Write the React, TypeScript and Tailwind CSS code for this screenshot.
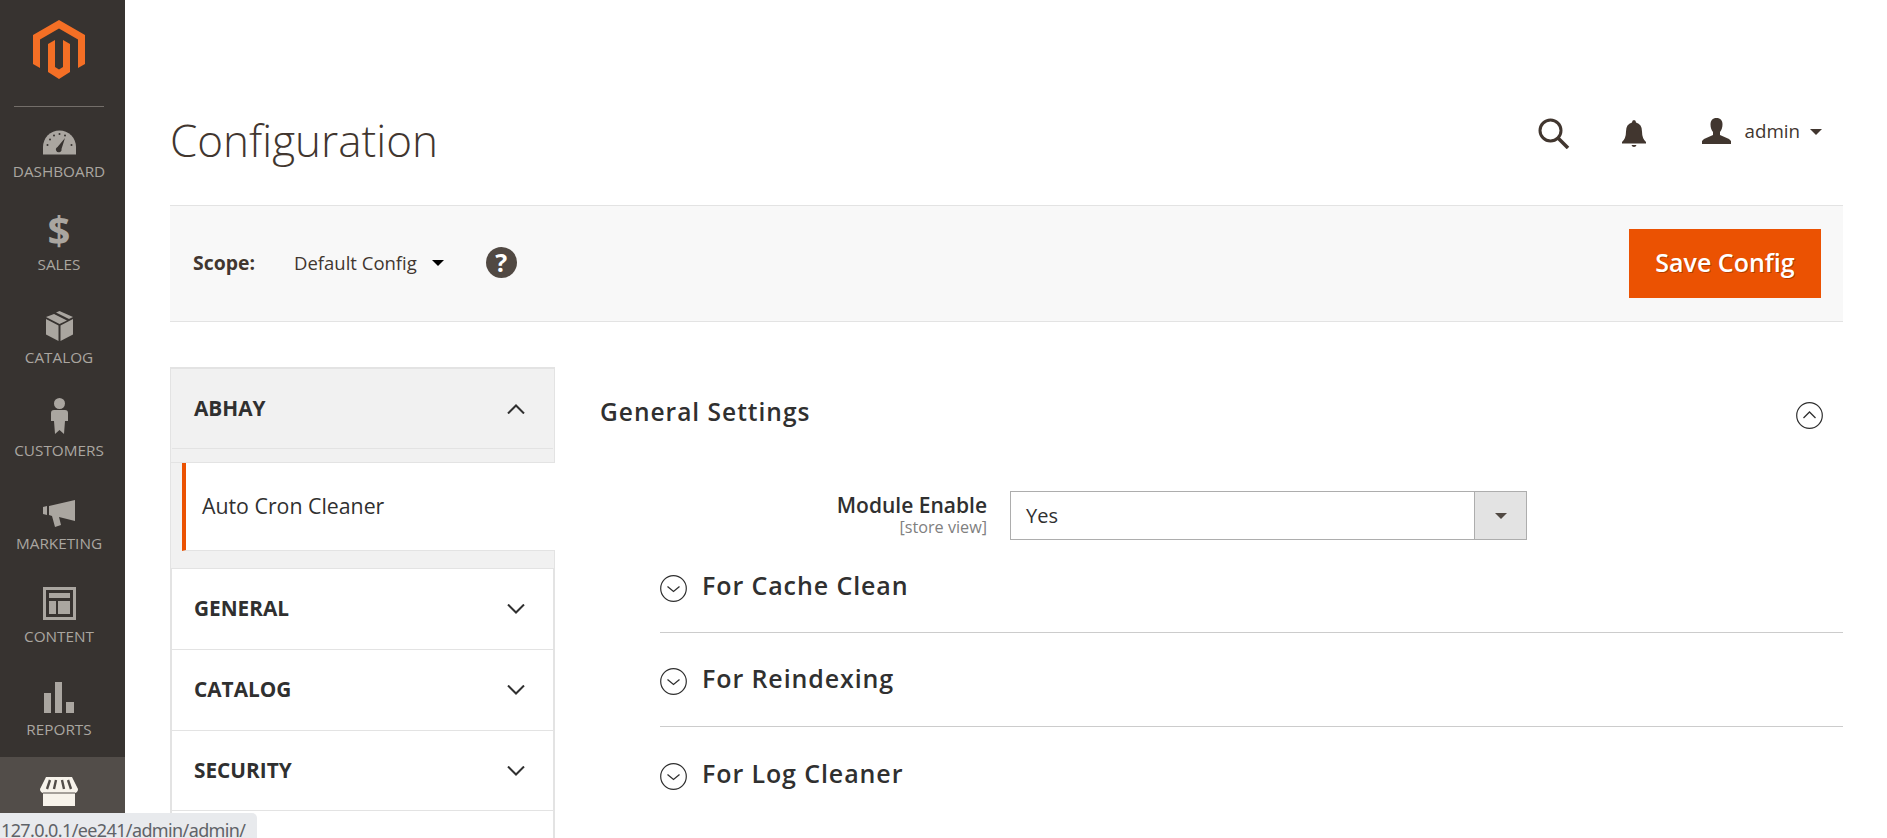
import type { ReactNode } from "react";

const font = "font-['Open_Sans',sans-serif]";

/* sidebar icons, drawn to the pixel box they have in the admin menu */
const DashboardIcon = () => (
  <svg width="33" height="25" viewBox="0 0 33 25">
    <path d="M0 24.500V17A16.500 16.500 0 0 1 33 17v7.500z" fill="#aaa6a0" />
    <g fill="#373330">
      <circle cx="4.500" cy="15" r="1" />
      <circle cx="7" cy="9.500" r="1" />
      <circle cx="11" cy="5.500" r="1" />
      <circle cx="16.500" cy="4" r="1" />
      <circle cx="22" cy="5.500" r="1" />
      <circle cx="28.500" cy="15" r="1" />
      <path d="M22 8l-3.500 11a2.800 2.800 0 1 1-4-2z" />
    </g>
  </svg>
);

const BoxIcon = () => (
  <svg width="27" height="30" viewBox="0 0 27 30">
    <path d="M0 8l12.500 6.500V30L0 23.500z M14.500 14.500L27 8v15.500L14.500 30z" fill="#aaa6a0" />
    <path d="M13.500 0L27 6l-4 2-13-6.500z M8 3l13 6.500-7.500 3.500L0 6z" fill="#aaa6a0" />
  </svg>
);

const CustomerIcon = () => (
  <svg width="17" height="36" viewBox="0 0 17 36">
    <circle cx="8.500" cy="5.500" r="5.500" fill="#aaa6a0" />
    <path d="M3 12h11q3 0 3 3v8h-3l-1 13-4.500-4L4 36 3 23H0v-8q0-3 3-3z" fill="#aaa6a0" />
  </svg>
);

const MegaphoneIcon = () => (
  <svg width="32" height="27" viewBox="0 0 32 27">
    <path d="M0 7l4-1v9l-4-1z M6 6l26-6v21L16 17l2 8-6 2-3-11-3-1z" fill="#aaa6a0" />
  </svg>
);

const ContentIcon = () => (
  <svg width="33" height="33" viewBox="0 0 33 33">
    <path fillRule="evenodd" d="M0 0h33v33H0z M3 3v27h27V3z" fill="#aaa6a0" />
    <path d="M6 6h21v5H6z M6 14h7v13H6z M15 14h12v13H15z" fill="#aaa6a0" />
  </svg>
);

const ReportsIcon = () => (
  <svg width="30" height="31" viewBox="0 0 30 31">
    <path d="M0 11h7v20H0z M11 0h7v31h-7z M22 20h8v11h-8z" fill="#aaa6a0" />
  </svg>
);

const StoreIcon = () => (
  <svg width="38" height="29" viewBox="0 0 38 29">
    <path d="M6 0h26l6 12q0 3-3 4v13H3V16q-3-1-3-4z" fill="#f7f3eb" />
    <path d="M10 3L7 12 M16 3l-2 9 M22 3l2 9 M28 3l3 9" stroke="#524d49" strokeWidth="2.400" fill="none" />
    <path d="M3 16h32" stroke="#524d49" strokeWidth="1" />
  </svg>
);

const navItems: { label?: string; icon: ReactNode; active?: boolean }[] = [
  { label: "Dashboard", icon: <DashboardIcon /> },
  {
    label: "Sales",
    icon: <span className="text-[40px] font-bold leading-[36px] text-[#aaa6a0]">$</span>,
  },
  { label: "Catalog", icon: <BoxIcon /> },
  { label: "Customers", icon: <CustomerIcon /> },
  { label: "Marketing", icon: <MegaphoneIcon /> },
  { label: "Content", icon: <ContentIcon /> },
  { label: "Reports", icon: <ReportsIcon /> },
  // the label of this one sits behind the browser's status bubble
  { icon: <StoreIcon />, active: true },
];

function Sidebar() {
  return (
    <aside className="flex h-full w-[125px] shrink-0 flex-col bg-[#373330]">
      <div className="mr-[21px] mb-[-1px] ml-[14px] flex h-[107px] shrink-0 justify-center border-b border-[#736e69] pt-[20px]">
        <svg width="52" height="59" viewBox="0 0 52 59">
          <path
            d="M26 0l26 15v29l-7 4V19.500L26 8.500 7 19.500V48l-7-4V15z M15 24l7-4v27l4 2.500 4-2.500V20l7 4v28l-11 7-11-7z"
            fill="#f46f25"
          />
        </svg>
      </div>
      {navItems.map((item, i) => (
        <div
          key={i}
          className={`flex h-[93px] shrink-0 flex-col items-center pt-[9px] pr-[7px] ${item.active ? "bg-[#524d49]" : ""}`}
        >
          <div className="flex h-[40px] items-end justify-center">{item.icon}</div>
          {item.label ? (
            <span className="mt-[8px] text-[15.3px] leading-[16px] text-[#aaa6a0] uppercase">
              {item.label}
            </span>
          ) : null}
        </div>
      ))}
    </aside>
  );
}

function Caret({ color = "#000" }: { color?: string }) {
  return (
    <svg width="12" height="6" viewBox="0 0 12 6">
      <path d="M0 0h12L6 6z" fill={color} />
    </svg>
  );
}

function TopBar() {
  return (
    <div className="flex h-[205px] items-start justify-between">
      <h1 className="mt-[115px] text-[44px] leading-[50px] font-light text-[#41362f]">
        Configuration
      </h1>
      <div className="mt-[118px] flex items-start pr-[21px]">
        <svg width="32" height="31" viewBox="0 0 32 31" className="mr-[52px]">
          <circle cx="12.500" cy="12.500" r="10.500" fill="none" stroke="#41362f" strokeWidth="3" />
          <path d="M20 20l10 10" stroke="#41362f" strokeWidth="3.500" />
        </svg>
        <svg width="24" height="27" viewBox="0 0 24 27" className="mt-[2px] mr-[56px]">
          <path
            d="M12 0q2 0 2 2.500 6 1.500 6 9 0 7 4 10.500v1.500H0V22q4-3.500 4-10.500 0-7.500 6-9Q10 0 12 0z M9.500 25h5Q14 27 12 27t-2.500-2z"
            fill="#41362f"
          />
        </svg>
        <svg width="29" height="26" viewBox="0 0 29 26" className="mr-[14px]">
          <path
            d="M14.500 0c4 0 6 2.500 6 6.500 0 3-1 5.500-2.500 7.500v3l9 4 2 2v3H0v-3l2-2 9-4v-3C9.500 12 8.500 9.500 8.500 6.500c0-4 2-6.500 6-6.500z"
            fill="#41362f"
          />
        </svg>
        <span className="text-[18.75px] leading-[26px] text-[#41362f]">admin</span>
        <span className="mt-[11px] ml-[10px] flex">
          <Caret color="#41362f" />
        </span>
      </div>
    </div>
  );
}

function ActionBar() {
  return (
    <div className="flex h-[117px] items-center justify-between border-y border-[#e3e3e3] bg-[#f8f8f8] pr-[22px] pl-[23px]">
      <div className="flex items-center pb-[2px] text-[#41362f]">
        <span className="w-[101px] text-[19.4px] font-bold">Scope:</span>
        <span className="text-[18.5px]">Default Config</span>
        <span className="ml-[15px] flex">
          <Caret />
        </span>
        <span className="ml-[42px] flex h-[31px] w-[31px] items-center justify-center rounded-full bg-[#514943] text-[25px] font-bold text-white">
          ?
        </span>
      </div>
      <button
        type="button"
        className="flex h-[69px] w-[192px] items-center justify-center bg-[#eb5202] pb-[2px] text-[25px] font-semibold text-white [text-shadow:1px_1px_0_rgba(0,0,0,0.25)]"
      >
        Save Config
      </button>
    </div>
  );
}

function PanelChevron({ up }: { up?: boolean }) {
  return (
    <svg width="18" height="10" viewBox="0 0 18 10">
      <path
        d={up ? "M1 9.500l8-8 8 8" : "M1 .5l8 8 8-8"}
        fill="none"
        stroke="#303030"
        strokeWidth="2"
      />
    </svg>
  );
}

function ConfigPanel() {
  return (
    <div className="w-[385px] shrink-0">
      <div className="border-x border-t-2 border-[#e3e3e3] bg-[#f1f1f1]">
        <div className="mx-[1px] flex h-[80px] items-center justify-between border-b border-[#e3e3e3] pr-[28px] pl-[22px]">
          <span className="text-[20.8px] font-bold text-[#303030]">ABHAY</span>
          <PanelChevron up />
        </div>
        <div className="h-[14px] border-b border-[#e3e3e3]" />
      </div>
      <div className="border-l border-[#e3e3e3] bg-[#f1f1f1] pl-[11px]">
        <div className="flex h-[88px] items-center border-b border-l-4 border-[#e3e3e3] border-l-[#eb5202] bg-white pb-[2px] pl-[16px] text-[21.3px] text-[#303030]">
          Auto Cron Cleaner
        </div>
      </div>
      <div className="h-[18px] border-x border-b border-[#e3e3e3] bg-[#f1f1f1]" />
      <div className="border-x-2 border-[#e3e3e3]">
        {["General", "Catalog", "Security"].map((name, i) => (
          <div
            key={name}
            className={`flex items-center justify-between border-b border-[#e3e3e3] pr-[28px] pl-[22px] ${i === 2 ? "h-[80px]" : "h-[81px]"}`}
          >
            <span className="text-[20.8px] font-bold text-[#303030] uppercase">{name}</span>
            <PanelChevron />
          </div>
        ))}
        <div className="h-[40px]" />
      </div>
    </div>
  );
}

function RoundChevron({ up, className = "" }: { up?: boolean; className?: string }) {
  return (
    <svg width="27" height="27" viewBox="0 0 27 27" className={`shrink-0 ${className}`}>
      <circle cx="13.500" cy="13.500" r="12.800" fill="none" stroke="#303030" strokeWidth="1.200" />
      <path
        d={up ? "M7.500 16l6-6 6 6" : "M7.500 11.500l6 5 6-5"}
        fill="none"
        stroke="#303030"
        strokeWidth="1.300"
      />
    </svg>
  );
}

function SubSection({ title, first, last }: { title: string; first?: boolean; last?: boolean }) {
  return (
    <div
      className={`flex items-center gap-[15px] ${first ? "h-[93px]" : "h-[94px]"} ${last ? "" : "border-b border-[#cccccc]"}`}
    >
      <RoundChevron className="mt-[4px]" />
      <span className="pb-[1px] text-[25px] font-semibold tracking-[0.9px] text-[#303030]">
        {title}
      </span>
    </div>
  );
}

function SettingsForm() {
  return (
    <div className="ml-[45px] min-w-0 flex-1">
      <div className="flex h-[124px] items-start justify-between pr-[20px]">
        <span className="mt-[28px] text-[24.5px] leading-[34px] font-semibold tracking-[1px] text-[#303030]">
          General Settings
        </span>
        <span className="mt-[35px] flex">
          <RoundChevron up />
        </span>
      </div>
      <div className="flex items-start">
        <div className="flex w-[387px] flex-col items-end pt-[1px]">
          <span className="text-[21px] leading-[26px] font-semibold text-[#303030]">
            Module Enable
          </span>
          <span className="text-[16.2px] leading-[18px] text-[#808080]">[store view]</span>
        </div>
        <div className="ml-[23px] flex h-[49px] w-[517px] border border-[#adadad]">
          <span className="flex flex-1 items-center pl-[15px] text-[20px] text-[#303030]">
            Yes
          </span>
          <span className="flex w-[52px] items-center justify-center border-l border-[#adadad] bg-[#e3e3e3]">
            <Caret color="#514943" />
          </span>
        </div>
      </div>
      <div className="ml-[60px]">
        <SubSection title="For Cache Clean" first />
        <SubSection title="For Reindexing" />
        <SubSection title="For Log Cleaner" last />
      </div>
    </div>
  );
}

export default function App() {
  return (
    <div className={`relative flex h-[838px] w-full overflow-hidden bg-white ${font}`}>
      <Sidebar />
      <main className="min-w-0 flex-1 pr-[44px] pl-[45px]">
        <TopBar />
        <ActionBar />
        <div className="mt-[45px] flex">
          <ConfigPanel />
          <SettingsForm />
        </div>
      </main>
      <div className="absolute bottom-0 left-0 h-[25px] w-[257px] overflow-hidden rounded-tr-[5px] bg-[#e8eaed] pl-[1px] font-['Noto_Sans',sans-serif] text-[18px] leading-[35px] tracking-[-0.62px] text-[#5f6368]">
        127.0.0.1/ee241/admin/admin/
      </div>
    </div>
  );
}
